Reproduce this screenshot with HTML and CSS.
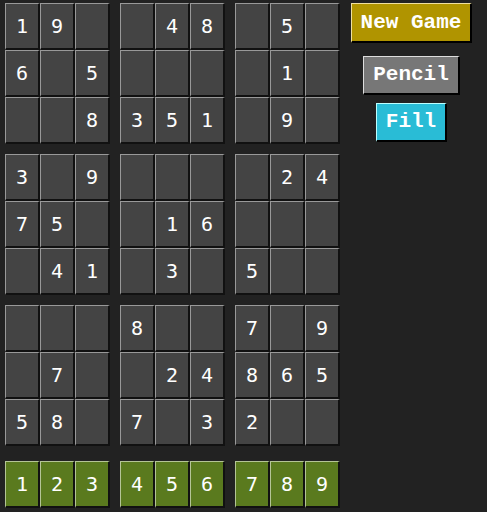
FILE: index.html
```html
<!DOCTYPE html>
<html lang="en">
<head>
    <meta charset="UTF-8">
    <meta name="viewport" content="width=device-width, initial-scale=1.0">
    <title>Sudoku</title>
    <link rel="stylesheet" href="styles.css">
</head>
<body>
    <div class="game">
        <div>
            <div class="board" id="board"></div>
            <div class="pad" id="pad"></div>
        </div>
        <div class="side">
            <button class="btn btn-new">New Game</button>
            <button class="btn btn-pencil">Pencil</button>
            <button class="btn btn-fill">Fill</button>
        </div>
    </div>

    <script>
        // 0 = empty square
        const puzzle = [
            [1, 9, 0, 0, 4, 8, 0, 5, 0],
            [6, 0, 5, 0, 0, 0, 0, 1, 0],
            [0, 0, 8, 3, 5, 1, 0, 9, 0],
            [3, 0, 9, 0, 0, 0, 0, 2, 4],
            [7, 5, 0, 0, 1, 6, 0, 0, 0],
            [0, 4, 1, 0, 3, 0, 5, 0, 0],
            [0, 0, 0, 8, 0, 0, 7, 0, 9],
            [0, 7, 0, 0, 2, 4, 8, 6, 5],
            [5, 8, 0, 7, 0, 3, 2, 0, 0]
        ];

        const board = document.getElementById('board');
        for (let b = 0; b < 9; b++) {
            const box = document.createElement('div');
            box.className = 'box';
            const r0 = Math.floor(b / 3) * 3;
            const c0 = (b % 3) * 3;
            for (let i = 0; i < 9; i++) {
                const value = puzzle[r0 + Math.floor(i / 3)][c0 + i % 3];
                const cell = document.createElement('div');
                cell.className = 'cell';
                cell.textContent = value ? value : '';
                box.appendChild(cell);
            }
            board.appendChild(box);
        }

        const pad = document.getElementById('pad');
        for (let g = 0; g < 3; g++) {
            const group = document.createElement('div');
            group.className = 'pad-group';
            for (let n = 1; n <= 3; n++) {
                const key = document.createElement('div');
                key.className = 'cell key';
                key.textContent = g * 3 + n;
                group.appendChild(key);
            }
            pad.appendChild(group);
        }
    </script>
</body>
</html>
```

FILE: styles.css
```css
body {
    margin: 0;
    padding: 3px 0 0 5px;
    background: #222;
    font-family: "DejaVu Sans Mono", monospace;
}
.game {
    display: flex;
}
.board {
    display: grid;
    grid-template-columns: repeat(3, 105px);
    gap: 10px;
}
.box {
    display: grid;
    grid-template-columns: repeat(3, 35px);
}
.cell {
    box-sizing: border-box;
    width: 35px;
    height: 47px;
    background: #444;
    border-top: 1px solid #999;
    border-left: 1px solid #999;
    border-right: 2px solid #111;
    border-bottom: 2px solid #111;
    color: #fff;
    font-size: 20px;
    display: flex;
    align-items: center;
    justify-content: center;
}
.pad {
    display: flex;
    gap: 10px;
    margin-top: 15px;
}
.pad-group {
    display: flex;
}
.key {
    background: #5a7a1e;
    border-top-color: #b4c496;
    border-left-color: #b4c496;
}
.side {
    width: 143px;
    display: flex;
    flex-direction: column;
    align-items: center;
}
.btn {
    box-sizing: border-box;
    height: 39px;
    font-family: "Liberation Mono", monospace;
    font-weight: bold;
    font-size: 21px;
    line-height: 24px;
    color: #fff;
    padding: 0 9px;
    border-style: solid;
    border-width: 1px 2px 2px 1px;
    border-color: #ddd #000 #000 #ddd;
    cursor: pointer;
}
.btn-new {
    height: 40px;
    background: #b09400;
    border-color: #f0e0a0 #000 #000 #f0e0a0;
}
.btn-pencil {
    background: #777;
    margin-top: 13px;
}
.btn-fill {
    background: #29bcd6;
    border-color: #bff #000 #000 #bff;
    margin-top: 8px;
}
```
